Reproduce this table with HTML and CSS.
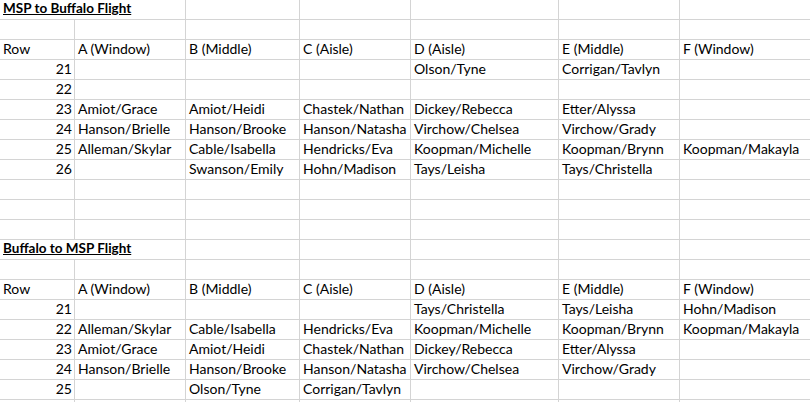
FILE: index.html
```html
<!DOCTYPE html>
<html>
<head>
<meta charset="utf-8">
<link rel="stylesheet" href="styles.css">
</head>
<body>
<table class="sheet">
<colgroup>
<col class="c0"><col class="c1"><col class="c2"><col class="c3"><col class="c4"><col class="c5"><col class="c6">
</colgroup>
<tbody>
<tr class="first"><td colspan="2" class="title">MSP to Buffalo Flight</td><td></td><td></td><td></td><td></td><td></td></tr>
<tr><td></td><td></td><td></td><td></td><td></td><td></td><td></td></tr>
<tr><td>Row</td><td>A (Window)</td><td>B (Middle)</td><td>C (Aisle)</td><td>D (Aisle)</td><td>E (Middle)</td><td>F (Window)</td></tr>
<tr><td class="num">21</td><td></td><td></td><td></td><td>Olson/Tyne</td><td>Corrigan/Tavlyn</td><td></td></tr>
<tr><td class="num">22</td><td></td><td></td><td></td><td></td><td></td><td></td></tr>
<tr><td class="num">23</td><td>Amiot/Grace</td><td>Amiot/Heidi</td><td>Chastek/Nathan</td><td>Dickey/Rebecca</td><td>Etter/Alyssa</td><td></td></tr>
<tr><td class="num">24</td><td>Hanson/Brielle</td><td>Hanson/Brooke</td><td>Hanson/Natasha</td><td>Virchow/Chelsea</td><td>Virchow/Grady</td><td></td></tr>
<tr><td class="num">25</td><td>Alleman/Skylar</td><td>Cable/Isabella</td><td>Hendricks/Eva</td><td>Koopman/Michelle</td><td>Koopman/Brynn</td><td>Koopman/Makayla</td></tr>
<tr><td class="num">26</td><td></td><td>Swanson/Emily</td><td>Hohn/Madison</td><td>Tays/Leisha</td><td>Tays/Christella</td><td></td></tr>
<tr><td></td><td></td><td></td><td></td><td></td><td></td><td></td></tr>
<tr><td></td><td></td><td></td><td></td><td></td><td></td><td></td></tr>
<tr><td></td><td></td><td></td><td></td><td></td><td></td><td></td></tr>
<tr><td colspan="2" class="title">Buffalo to MSP Flight</td><td></td><td></td><td></td><td></td><td></td></tr>
<tr><td></td><td></td><td></td><td></td><td></td><td></td><td></td></tr>
<tr><td>Row</td><td>A (Window)</td><td>B (Middle)</td><td>C (Aisle)</td><td>D (Aisle)</td><td>E (Middle)</td><td>F (Window)</td></tr>
<tr><td class="num">21</td><td></td><td></td><td></td><td>Tays/Christella</td><td>Tays/Leisha</td><td>Hohn/Madison</td></tr>
<tr><td class="num">22</td><td>Alleman/Skylar</td><td>Cable/Isabella</td><td>Hendricks/Eva</td><td>Koopman/Michelle</td><td>Koopman/Brynn</td><td>Koopman/Makayla</td></tr>
<tr><td class="num">23</td><td>Amiot/Grace</td><td>Amiot/Heidi</td><td>Chastek/Nathan</td><td>Dickey/Rebecca</td><td>Etter/Alyssa</td><td></td></tr>
<tr><td class="num">24</td><td>Hanson/Brielle</td><td>Hanson/Brooke</td><td>Hanson/Natasha</td><td>Virchow/Chelsea</td><td>Virchow/Grady</td><td></td></tr>
<tr><td class="num">25</td><td></td><td>Olson/Tyne</td><td>Corrigan/Tavlyn</td><td></td><td></td><td></td></tr>
<tr><td></td><td></td><td></td><td></td><td></td><td></td><td></td></tr>
</tbody>
</table>
</body>
</html>
```
FILE: styles.css
```css
html, body {
  margin: 0;
  padding: 0;
  background: #ffffff;
  overflow: hidden;
}
.sheet {
  border-collapse: separate;
  border-spacing: 0;
  table-layout: fixed;
  width: 830px;
  font-family: Lato, "Open Sans", sans-serif;
  font-size: 14px;
  color: #000000;
}
.c0 { width: 75px; }
.c1 { width: 111px; }
.c2 { width: 114px; }
.c3 { width: 111px; }
.c4 { width: 148px; }
.c5 { width: 121px; }
.c6 { width: 150px; }
.sheet td {
  box-sizing: border-box;
  height: 20px;
  padding: 0 2px 2px 3px;
  border-right: 1px solid #d4d4d4;
  border-bottom: 1px solid #d4d4d4;
  vertical-align: bottom;
  white-space: nowrap;
  overflow: visible;
  line-height: 17px;
}
.sheet tr.first td {
  height: 17px;
}
.sheet td.num {
  text-align: right;
  padding-right: 2px;
}
.sheet td.title {
  font-weight: bold;
  text-decoration: underline;
  font-size: 13.5px;
}
```
